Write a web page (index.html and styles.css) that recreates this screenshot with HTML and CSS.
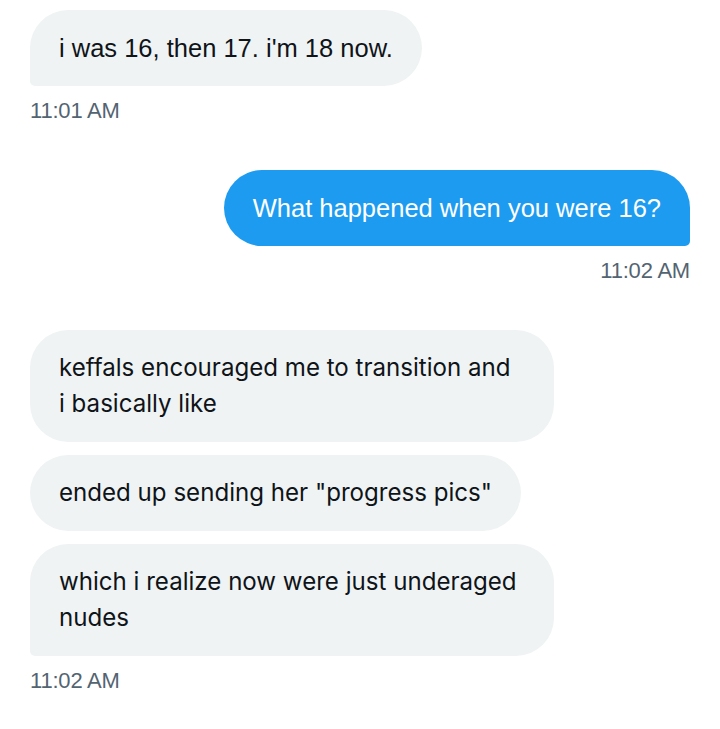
FILE: index.html
```html
<!DOCTYPE html>
<html>
<head>
<meta charset="utf-8">
<link rel="stylesheet" href="styles.css">
</head>
<body>
<div class="chat">
  <div class="group in">
    <div class="bubble in last classic">i was 16, then 17. i'm 18 now.</div>
    <div class="time">11:01 AM</div>
  </div>
  <div class="group out">
    <div class="bubble out last classic">What happened when you were 16?</div>
    <div class="time">11:02 AM</div>
  </div>
  <div class="group in">
    <div class="bubble in chirp wide">keffals encouraged me to transition and<br>i basically like</div>
    <div class="bubble in chirp">ended up sending her "progress pics"</div>
    <div class="bubble in last chirp wide">which i realize now were just underaged<br>nudes</div>
    <div class="time">11:02 AM</div>
  </div>
</div>
</body>
</html>
```

FILE: styles.css
```css
html, body {
  margin: 0;
  padding: 0;
  background: #ffffff;
}

.chat {
  display: flex;
  flex-direction: column;
  padding: 10px 30px 0 30px;
}

.group {
  display: flex;
  flex-direction: column;
  gap: 13px;
  margin-bottom: 47px;
}

.group.in {
  align-items: flex-start;
}

.group.out {
  align-items: flex-end;
}

.bubble {
  font-size: 25px;
  line-height: 36px;
  padding: 20px 29px;
  border-radius: 38px;
  box-sizing: border-box;
}

.bubble.classic {
  font-family: "Liberation Sans", Arial, sans-serif;
  font-size: 25.5px;
}

.bubble.chirp {
  font-family: Inter, "Liberation Sans", sans-serif;
  font-size: 24.1px;
}

.bubble.wide {
  width: 524px;
}

.bubble.in {
  background: #eff3f4;
  color: #0f1419;
}

.bubble.out {
  background: #1d9bf0;
  color: #ffffff;
}

.bubble.in.last {
  border-bottom-left-radius: 5px;
}

.bubble.out.last {
  border-bottom-right-radius: 5px;
}

.time {
  font-family: "Liberation Sans", Arial, sans-serif;
  font-size: 22px;
  letter-spacing: -0.2px;
  line-height: 24px;
  color: #536471;
}
```
